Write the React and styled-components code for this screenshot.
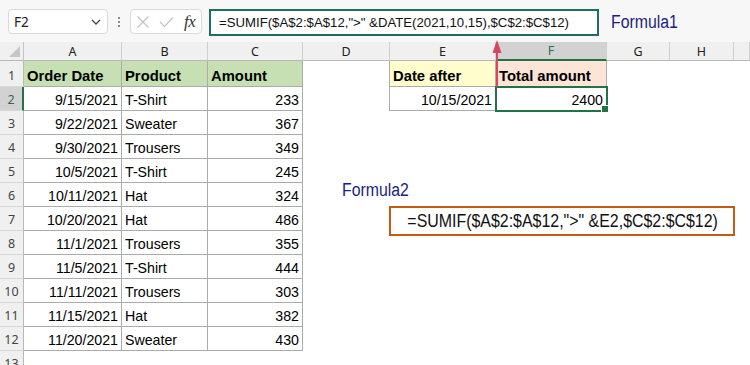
import React from 'react';
import styled, { createGlobalStyle, css } from 'styled-components';

const Global = createGlobalStyle`
  html, body { margin: 0; padding: 0; background: #fff; }
  body { font-family: "Liberation Sans", Arial, sans-serif; }
  * { box-sizing: border-box; }
`;

const Page = styled.div`
  position: relative;
  width: 750px;
  height: 365px;
  overflow: hidden;
  background: #fff;
  display: flex;
  flex-direction: column;
`;

const TopBar = styled.div`
  height: 42px;
  flex: none;
  background: #f7f7f7;
  display: flex;
  align-items: flex-start;
  padding: 9px 0 0 8px;
`;

const NameBox = styled.div`
  width: 100px;
  height: 25px;
  background: #fff;
  border: 1px solid #d9d9d9;
  border-radius: 4px;
  display: flex;
  align-items: center;
  justify-content: space-between;
  padding: 0 6px 0 5px;
  font-family: "Noto Sans", "Liberation Sans", sans-serif;
  font-size: 13.5px;
  color: #222;
`;

const Dots = styled.div`
  width: 22px;
  height: 25px;
  display: flex;
  flex-direction: column;
  align-items: center;
  justify-content: center;
  gap: 2px;
  & > span {
    width: 2px;
    height: 2px;
    background: #8a8a8a;
  }
`;

const FxBox = styled.div`
  width: 72px;
  height: 25px;
  background: #fff;
  border: 1px solid #d9d9d9;
  border-radius: 4px;
  display: flex;
  align-items: center;
  padding-left: 5px;
  gap: 9px;
`;

const FxText = styled.span`
  font-family: "Liberation Serif", serif;
  font-style: italic;
  font-size: 17px;
  color: #333;
  margin-left: 1px;
  letter-spacing: -0.5px;
`;

const FormulaBox = styled.div`
  margin-left: 7px;
  width: 390px;
  height: 27px;
  background: #fff;
  border: 2px solid #1f6e66;
  display: flex;
  align-items: center;
  padding-left: 8px;
  font-size: 13.2px;
  color: #111;
  white-space: nowrap;
`;

const Label = styled.div`
  font-size: 18px;
  color: #1b1f7c;
  white-space: nowrap;
  transform: scaleX(0.88);
  transform-origin: left center;
`;

const TopLabel = styled(Label)`
  margin-left: 12px;
  line-height: 27px;
`;

const Sheet = styled.div`
  flex: 1;
  display: grid;
  grid-template-columns: 24px 98px 86px 95px 87px 106px 111px 63px 64px 1fr;
  grid-template-rows: 19px 26px repeat(12, 24px);
`;

const Corner = styled.div`
  position: relative;
  background: #f0f0f0;
  border-right: 1px solid #c4c4c4;
  border-bottom: 1px solid #b8b8b8;
  &::after {
    content: "";
    position: absolute;
    right: 3px;
    bottom: 3px;
    width: 0;
    height: 0;
    border-left: 11px solid transparent;
    border-bottom: 11px solid #c6c6c6;
  }
`;

const ColHead = styled.div`
  display: flex;
  align-items: center;
  justify-content: center;
  font-family: "Noto Sans", "Liberation Sans", sans-serif;
  font-size: 12.5px;
  color: #222;
  background: ${p => (p.$active ? '#d2d2d2' : '#f0f0f0')};
  border-right: 1px solid #cfcfcf;
  border-bottom: ${p => (p.$active ? '2px solid #217346' : '1px solid #b8b8b8')};
  ${p => p.$active && css`color: #217346;`}
`;

const RowHead = styled.div`
  display: flex;
  align-items: flex-end;
  justify-content: center;
  padding-bottom: 2px;
  font-family: "Noto Sans", "Liberation Sans", sans-serif;
  font-size: 12.5px;
  color: #444;
  background: ${p => (p.$active ? '#d2d2d2' : '#f0f0f0')};
  border-right: ${p => (p.$active ? '2px solid #217346' : '1px solid #b8b8b8')};
  border-bottom: 1px solid #d8d8d8;
  ${p => p.$active && css`color: #2f6b4a;`}
`;

const Cell = styled.div`
  position: relative;
  display: flex;
  align-items: flex-end;
  justify-content: ${p => (p.$right ? 'flex-end' : 'flex-start')};
  padding: 0 3px 2px 3px;
  line-height: 16px;
  white-space: nowrap;
  color: #000;
  font-size: ${p => (p.$bold ? '14.8px' : '14.2px')};
  font-weight: ${p => (p.$bold ? 700 : 400)};
  background: ${p => p.$bg || '#fff'};
  border-right: ${p => (p.$box || p.$edge ? '1px solid #ababab' : '0')};
  border-bottom: ${p => (p.$box ? '1px solid #ababab' : '0')};
  ${p =>
    p.$selected &&
    css`
      z-index: 1;
      outline: 2px solid #217346;
      outline-offset: -1px;
      &::after {
        content: "";
        position: absolute;
        right: -3px;
        bottom: -3px;
        width: 6px;
        height: 6px;
        background: #217346;
        border: 1px solid #fff;
      }
    `}
`;

const ArrowSvg = styled.svg`
  position: absolute;
  left: 492px;
  top: 39px;
  z-index: 3;
`;

const FloatLabel = styled(Label)`
  position: absolute;
  left: 342px;
  top: 180px;
`;

const ShapeBox = styled.div`
  position: absolute;
  left: 389px;
  top: 206px;
  width: 346px;
  height: 30px;
  border: 2px solid #c55a11;
  background: #fff;
  display: flex;
  align-items: center;
  justify-content: center;
  color: #111;
  white-space: nowrap;
`;

const ShapeText = styled.span`
  font-size: 17.5px;
  transform: scaleX(0.91);
  transform-origin: center;
  margin-left: 2px;
`;

const data = [
  ['9/15/2021', 'T-Shirt', 233],
  ['9/22/2021', 'Sweater', 367],
  ['9/30/2021', 'Trousers', 349],
  ['10/5/2021', 'T-Shirt', 245],
  ['10/11/2021', 'Hat', 324],
  ['10/20/2021', 'Hat', 486],
  ['11/1/2021', 'Trousers', 355],
  ['11/5/2021', 'T-Shirt', 444],
  ['11/11/2021', 'Trousers', 303],
  ['11/15/2021', 'Hat', 382],
  ['11/20/2021', 'Sweater', 430],
];

const letters = ['A', 'B', 'C', 'D', 'E', 'F', 'G', 'H', ''];

function rowCells(r) {
  const cells = letters.map(() => ({}));
  if (r === 1) {
    cells[0] = { text: 'Order Date', bold: true, box: true, bg: '#c6e0b4' };
    cells[1] = { text: 'Product', bold: true, box: true, bg: '#c6e0b4' };
    cells[2] = { text: 'Amount', bold: true, box: true, bg: '#c6e0b4' };
    cells[3] = { edge: true };
    cells[4] = { text: 'Date after', bold: true, box: true, bg: '#fffdcc' };
    cells[5] = { text: 'Total amount', bold: true, box: true, bg: '#fce4d6' };
  } else if (r <= 12) {
    const d = data[r - 2];
    cells[0] = { text: d[0], right: true, box: true };
    cells[1] = { text: d[1], box: true };
    cells[2] = { text: String(d[2]), right: true, box: true };
    if (r === 2) {
      cells[3] = { edge: true };
      cells[4] = { text: '10/15/2021', right: true, box: true };
      cells[5] = { text: '2400', right: true, box: true, selected: true };
    }
  }
  return cells;
}

function XIcon() {
  return (
    <svg width="14" height="14" viewBox="0 0 14 14">
      <path d="M1.5 1.5 L12.5 12.5 M12.5 1.5 L1.5 12.5" stroke="#c2c2c2" strokeWidth="1.2" fill="none" />
    </svg>
  );
}

function CheckIcon() {
  return (
    <svg width="15" height="12" viewBox="0 0 15 12">
      <path d="M1 6 L5.5 10.5 L14 1.5" stroke="#c2c2c2" strokeWidth="1.2" fill="none" />
    </svg>
  );
}

function Chevron() {
  return (
    <svg width="10" height="6" viewBox="0 0 10 6">
      <path d="M1 1 L5 5 L9 1" stroke="#444" strokeWidth="1.3" fill="none" />
    </svg>
  );
}

export default function App() {
  const rows = Array.from({ length: 13 }, (_, i) => i + 1);
  return (
    <>
      <Global />
      <Page>
        <TopBar>
          <NameBox>
            <span>F2</span>
            <Chevron />
          </NameBox>
          <Dots>
            <span />
            <span />
            <span />
          </Dots>
          <FxBox>
            <XIcon />
            <CheckIcon />
            <FxText>fx</FxText>
          </FxBox>
          <FormulaBox>=SUMIF($A$2:$A$12,"&gt;" &amp;DATE(2021,10,15),$C$2:$C$12)</FormulaBox>
          <TopLabel>Formula1</TopLabel>
        </TopBar>
        <Sheet>
          <Corner />
          {letters.map((l, i) => (
            <ColHead key={'h' + i} $active={l === 'F'}>
              {l}
            </ColHead>
          ))}
          {rows.map(r => (
            <React.Fragment key={r}>
              <RowHead $active={r === 2}>{r}</RowHead>
              {rowCells(r).map((c, i) => (
                <Cell
                  key={i}
                  $bold={c.bold}
                  $right={c.right}
                  $box={c.box}
                  $edge={c.edge}
                  $bg={c.bg}
                  $selected={c.selected}
                >
                  {c.text}
                </Cell>
              ))}
            </React.Fragment>
          ))}
        </Sheet>
        <ArrowSvg width="10" height="48" viewBox="0 0 10 48">
          <path d="M5 10 L5 48" stroke="#d9465f" strokeWidth="2" />
          <path d="M5 1 L9.5 14 L0.5 14 Z" fill="#d9465f" />
        </ArrowSvg>
        <FloatLabel>Formula2</FloatLabel>
        <ShapeBox>
          <ShapeText>=SUMIF($A$2:$A$12,"&gt;" &amp;E2,$C$2:$C$12)</ShapeText>
        </ShapeBox>
      </Page>
    </>
  );
}
